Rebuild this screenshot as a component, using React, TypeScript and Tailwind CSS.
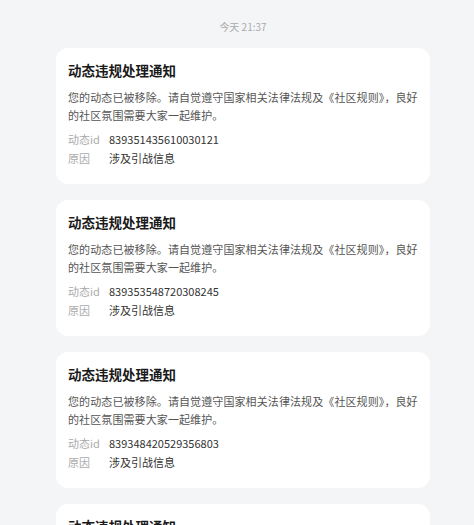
import React from 'react';

interface Notice {
  id: string;
  reason: string;
}

const notices: Notice[] = [
  { id: '839351435610030121', reason: '涉及引战信息' },
  { id: '839353548720308245', reason: '涉及引战信息' },
  { id: '839348420529356803', reason: '涉及引战信息' },
  { id: '839340000000000000', reason: '涉及引战信息' },
];

const NoticeCard: React.FC<{ notice: Notice }> = ({ notice }) => (
  <div className="bg-white rounded-[12px] px-[12px] pt-[12px] pb-[16px]">
    <h3 className="text-[13.5px] leading-[20px] font-bold text-[#1a1a1a]">动态违规处理通知</h3>
    <p className="mt-[8px] text-[11px] leading-[18px] tracking-[0.1px] text-[#555555]">
      您的动态已被移除。请自觉遵守国家相关法律法规及《社区规则》，良好的社区氛围需要大家一起维护。
    </p>
    <div className="mt-[6px] text-[11px] leading-[19px]">
      <div className="flex">
        <span className="w-[41px] shrink-0 text-[#aaaaaa]">动态id</span>
        <span className="text-[#333333]">{notice.id}</span>
      </div>
      <div className="flex">
        <span className="w-[41px] shrink-0 text-[#aaaaaa]">原因</span>
        <span className="text-[#333333]">{notice.reason}</span>
      </div>
    </div>
  </div>
);

export default function App() {
  return (
    <div
      className="h-[525px] overflow-hidden bg-[#f4f5f7] pl-[56px] pt-[20px]"
      style={{ fontFamily: '"Noto Sans CJK SC", "Noto Sans", sans-serif' }}
    >
      <div className="w-[374px]">
        <div className="text-center text-[10px] leading-[14px] text-[#aaaaaa]">今天 21:37</div>
        <div className="mt-[14px] flex flex-col gap-[16px]">
          {notices.map((n, i) => (
            <NoticeCard key={i} notice={n} />
          ))}
        </div>
      </div>
    </div>
  );
}
